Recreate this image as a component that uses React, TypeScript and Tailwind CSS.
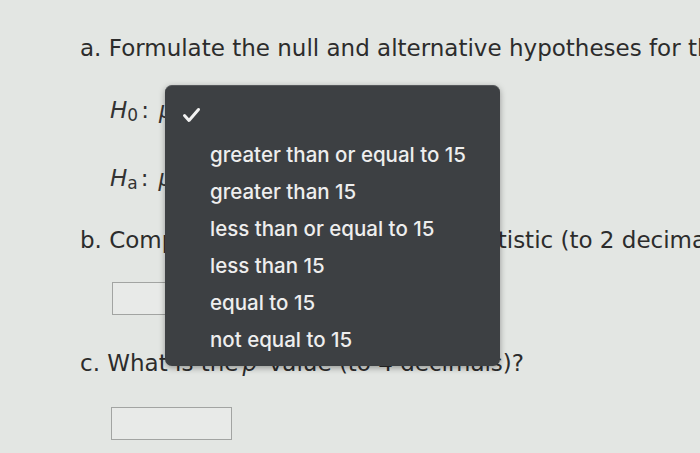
const options = [
  'greater than or equal to 15',
  'greater than 15',
  'less than or equal to 15',
  'less than 15',
  'equal to 15',
  'not equal to 15',
]

function Hypothesis({ sub }: { sub: string }) {
  return (
    <div className="flex items-center h-[34px] pl-[110px] text-[#333]">
      <span className="italic">H</span>
      <sub className="text-[17px] not-italic relative top-[5px]">{sub}</sub>
      <span className="ml-[3px]">:</span>
      <span className="italic ml-[10px]">μ</span>
    </div>
  )
}

export default function App() {
  return (
    <div
      className="relative w-[700px] h-[453px] overflow-hidden bg-[#e3e6e3] text-[23px] text-[#2c2c2c]"
      style={{ fontFamily: '"DejaVu Sans", Verdana, sans-serif' }}
    >
      <div className="pt-[33px] pl-[80px] whitespace-nowrap">
        <div className="h-[30px] flex items-center">
          a. Formulate the null and alternative hypotheses for the test.
        </div>
      </div>

      <div className="mt-[30px] whitespace-nowrap">
        <Hypothesis sub="0" />
        <div className="h-[34px]" />
        <Hypothesis sub="a" />
      </div>

      <div className="mt-[30px] pl-[80px] whitespace-nowrap h-[30px] flex items-center">
        b. Compute the value of the test statistic (to 2 decimals).
      </div>

      <div className="mt-[27px] ml-[112px] w-[120px] h-[33px] border border-[#a2a4a2] bg-[#e8eae8]" />

      <div className="mt-[33px] pl-[80px] whitespace-nowrap h-[30px] flex items-center">
        c. What is the <span className="italic mx-[4px]">p</span>-value (to 4 decimals)?
      </div>

      <div className="mt-[29px] ml-[111px] w-[121px] h-[33px] border border-[#a2a4a2] bg-[#e8eae8]" />

      <div
        className="absolute left-[165px] top-[85px] w-[335px] h-[281px] rounded-[7px] bg-[#3d4043] border-t border-[#55585b] shadow-[0_2px_6px_rgba(0,0,0,0.35)] pt-[13px] pb-[6px]"
        style={{ fontFamily: 'Inter, "Liberation Sans", Arial, sans-serif' }}
      >
        <div className="h-[32px] pl-[17px] flex items-center">
          <svg width="19" height="16" viewBox="0 0 19 16" fill="none">
            <path d="M2.5 8.5 L7 13.5 L16.5 2.5" stroke="#f2f2f2" strokeWidth="3" strokeLinecap="round" strokeLinejoin="round" />
          </svg>
        </div>
        <ul className="mt-[6px]">
          {options.map((o) => (
            <li key={o} className="h-[37px] pl-[45px] flex items-center text-[20.5px] font-medium text-[#eeeeee]">
              {o}
            </li>
          ))}
        </ul>
      </div>
    </div>
  )
}
